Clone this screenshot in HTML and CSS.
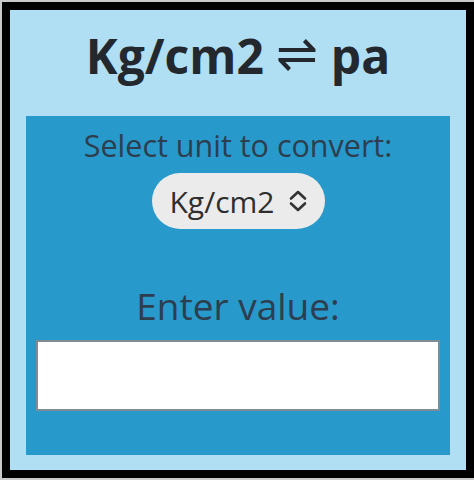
FILE: index.html
```html
<!DOCTYPE html>
<html lang="en">

<head>
    <meta charset="UTF-8">
    <meta name="viewport" content="width=device-width, initial-scale=1.0">
    <title>Kg/cm2 to pa</title>
    <link rel="stylesheet" href="styles.css">
</head>

<body>
    <div class="frame">
        <div class="panel">
            <h1 class="title">Kg/cm2 <span class="arrows">&#8652;</span> pa</h1>
            <div class="converter">
                <p class="label">Select unit to convert:</p>
                <div class="pill">
                    <select class="unit">
                        <option>Kg/cm2</option>
                        <option>pa</option>
                    </select>
                    <svg class="chev" width="18" height="22" viewBox="0 0 18 22">
                        <path d="M2 8.5 L9 2 L16 8.5" fill="none" stroke="#333" stroke-width="2.6" stroke-linecap="round" stroke-linejoin="round" />
                        <path d="M2 13.5 L9 20 L16 13.5" fill="none" stroke="#333" stroke-width="2.6" stroke-linecap="round" stroke-linejoin="round" />
                    </svg>
                </div>
                <p class="label big">Enter value:</p>
                <input class="value" type="text">
            </div>
        </div>
    </div>
</body>

</html>
```

FILE: styles.css
```css
* {
    margin: 0;
    padding: 0;
    box-sizing: border-box;
}

body {
    background-color: #c9c9c9;
    font-family: "Open Sans", "Noto Sans", sans-serif;
}

.frame {
    width: 472px;
    height: 476px;
    margin: 2px 0 0 2px;
    border: 8px solid #000;
}

.panel {
    height: 100%;
    background-color: #b0def3;
    padding: 13px 16px 15px;
}

.title {
    font-size: 48px;
    font-weight: 700;
    color: #22282d;
    text-align: center;
    height: 93px;
    line-height: 65px;
}

.arrows {
    font-weight: 200;
    font-family: "DejaVu Sans", sans-serif;
    font-size: 50px;
    line-height: 1;
    display: inline-block;
    vertical-align: top;
    margin-top: 6px;
}

.converter {
    height: 339px;
    background-color: #2899cb;
    padding: 9px 10px 0;
    display: flex;
    flex-direction: column;
    align-items: center;
}

.label {
    font-size: 30.5px;
    color: #2d3e4f;
    line-height: 40px;
}

.label.big {
    font-size: 37px;
    line-height: 49px;
    margin-top: 52px;
}

.pill {
    margin-top: 8px;
    width: 173px;
    height: 56px;
    border-radius: 28px;
    background-color: #ebebec;
    display: flex;
    align-items: center;
    padding: 0 18px 0 18px;
    gap: 10px;
}

.unit {
    appearance: none;
    -webkit-appearance: none;
    border: none;
    outline: none;
    background: transparent;
    font-family: "Open Sans", sans-serif;
    font-size: 30px;
    color: #2e2e2e;
    flex: 1;
}

.chev {
    flex: none;
}

.value {
    margin-top: 10px;
    width: 404px;
    height: 71px;
    border: 2px solid #7e8c96;
    background-color: #fff;
    outline: none;
}
```
